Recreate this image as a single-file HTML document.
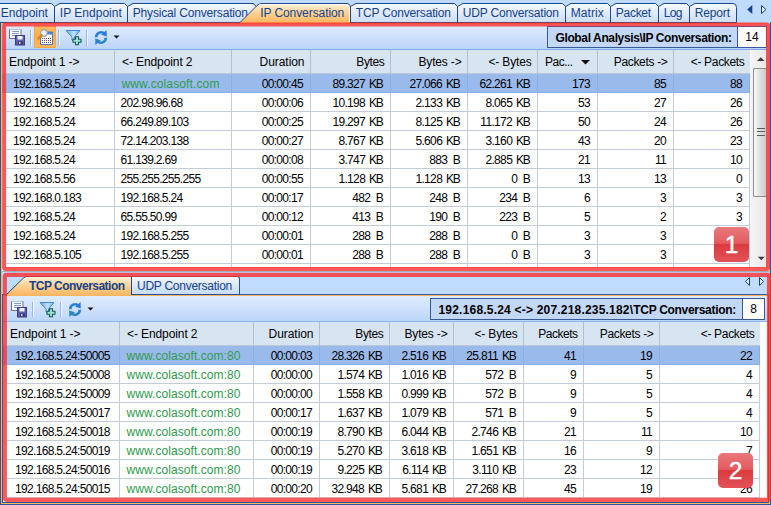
<!DOCTYPE html><html><head><meta charset="utf-8"><title>IP Conversation</title><style>
*{box-sizing:border-box;margin:0;padding:0}
html,body{width:771px;height:505px;overflow:hidden}
body{background:#bfdbff;font-family:"Liberation Sans",sans-serif;font-size:12px;color:#000;position:relative}
.abs{position:absolute}
.tab{position:absolute;top:3px;height:20px;border:1px solid #2b4f93;border-bottom:1px solid #2b4f93;border-radius:4px 4px 0 0;background:linear-gradient(#f4f8fe,#dbe8fa 45%,#c9dcf7);color:#15428b;white-space:nowrap;line-height:12px}
.tab span{position:absolute;top:3.3px}
.tb{position:absolute;background:linear-gradient(#dfecfe,#cfe1fc 50%,#bbd5fa);}
.hdr{position:absolute;background:#d7e4f2;border-bottom:1px solid #bcc8d8}
.hc{position:absolute;top:0;height:100%;border-right:1px solid #b4bfce;white-space:nowrap;line-height:12px}
.hc span{position:absolute;top:6px}
.row{position:absolute;left:0;height:19px;border-bottom:1px solid #c4ccda;background:#fff}
.row.sel{background:#9bbaec;border-bottom-color:#84b1ea}
.c{position:absolute;top:0;height:19px;border-right:1px solid #c4ccda;white-space:nowrap;line-height:12px;letter-spacing:-0.67px}
.row.sel .c{border-right-color:#84b1ea}
.c span{position:absolute;top:4px}
.g{color:#2e9a4d}
.c em{font-style:normal;letter-spacing:-1.3px;margin-left:1.2px;margin-right:0.6px}
.lbl{position:absolute;border:1px solid #38589c;background:#c3d8f6;font-weight:bold;white-space:nowrap;line-height:12px}
.lbl span{position:absolute;top:4px}
.lbl i{position:absolute;top:0;bottom:0;right:0;background:#fff;border-left:1px solid #38589c;font-style:normal;font-weight:normal;text-align:center}
.badge{position:absolute;width:35px;height:35px;border-radius:5px;background:linear-gradient(#e9797d,#e35a5f 47%,#db3a3f 49%,#e25257);color:#fff;font-size:24.5px;-webkit-text-stroke:0.45px #fff;line-height:36px;text-align:center}
.sep{position:absolute;width:2px;border-left:1px solid #9db8df;border-right:1px solid #f0f6ff}
</style></head><body>
<svg class="abs" style="left:0;top:0" width="771" height="24" viewBox="0 0 771 24"><defs><linearGradient id="tg" x1="0" y1="0" x2="0" y2="1"><stop offset="0" stop-color="#f7fafe"/><stop offset="0.45" stop-color="#e0ebfb"/><stop offset="1" stop-color="#cbddf7"/></linearGradient></defs><path d="M0 3.5 L733 3.5 Q736.5 3.5 736.5 7.5 L736.5 23 L0 23 Z" fill="url(#tg)"/><path d="M0 3.5 L733 3.5 Q736.5 3.5 736.5 7.5 L736.5 22.5 M0 22.5 L736.5 22.5" fill="none" stroke="#1f4690"/><path d="M0 4.5 L733 4.5" fill="none" stroke="#ffffff" stroke-opacity="0.8"/><path d="M50.5 2.5 L54.5 6.8 L61 2.5 Z" fill="#bfdbff"/><path d="M51.5 3.5 L54.5 6.5 L60 3.5 M54.5 6.5 L54.5 22.5" fill="none" stroke="#1f4690"/><path d="M123.5 2.5 L127.5 6.8 L134 2.5 Z" fill="#bfdbff"/><path d="M124.5 3.5 L127.5 6.5 L133 3.5 M127.5 6.5 L127.5 22.5" fill="none" stroke="#1f4690"/><path d="M346.5 2.5 L350.5 6.8 L357 2.5 Z" fill="#bfdbff"/><path d="M347.5 3.5 L350.5 6.5 L356 3.5 M350.5 6.5 L350.5 22.5" fill="none" stroke="#1f4690"/><path d="M453.5 2.5 L457.5 6.8 L464 2.5 Z" fill="#bfdbff"/><path d="M454.5 3.5 L457.5 6.5 L463 3.5 M457.5 6.5 L457.5 22.5" fill="none" stroke="#1f4690"/><path d="M561.5 2.5 L565.5 6.8 L572 2.5 Z" fill="#bfdbff"/><path d="M562.5 3.5 L565.5 6.5 L571 3.5 M565.5 6.5 L565.5 22.5" fill="none" stroke="#1f4690"/><path d="M606.5 2.5 L610.5 6.8 L617 2.5 Z" fill="#bfdbff"/><path d="M607.5 3.5 L610.5 6.5 L616 3.5 M610.5 6.5 L610.5 22.5" fill="none" stroke="#1f4690"/><path d="M654.5 2.5 L658.5 6.8 L665 2.5 Z" fill="#bfdbff"/><path d="M655.5 3.5 L658.5 6.5 L664 3.5 M658.5 6.5 L658.5 22.5" fill="none" stroke="#1f4690"/><path d="M685.5 2.5 L689.5 6.8 L696 2.5 Z" fill="#bfdbff"/><path d="M686.5 3.5 L689.5 6.5 L695 3.5 M689.5 6.5 L689.5 22.5" fill="none" stroke="#1f4690"/></svg>
<div class="abs" style="left:0.8px;top:7.3px;line-height:12px;color:#15428b;white-space:nowrap;letter-spacing:-0.045px">Endpoint</div>
<div class="abs" style="left:59.8px;top:7.3px;line-height:12px;color:#15428b;white-space:nowrap;letter-spacing:0.018px">IP Endpoint</div>
<div class="abs" style="left:132.8px;top:7.3px;line-height:12px;color:#15428b;white-space:nowrap;letter-spacing:-0.177px">Physical Conversation</div>
<div class="abs" style="left:355.8px;top:7.3px;line-height:12px;color:#15428b;white-space:nowrap;letter-spacing:-0.176px">TCP Conversation</div>
<div class="abs" style="left:462.8px;top:7.3px;line-height:12px;color:#15428b;white-space:nowrap;letter-spacing:-0.197px">UDP Conversation</div>
<div class="abs" style="left:570.8px;top:7.3px;line-height:12px;color:#15428b;white-space:nowrap;letter-spacing:0.055px">Matrix</div>
<div class="abs" style="left:615.8px;top:7.3px;line-height:12px;color:#15428b;white-space:nowrap;letter-spacing:-0.279px">Packet</div>
<div class="abs" style="left:663.8px;top:7.3px;line-height:12px;color:#15428b;white-space:nowrap;letter-spacing:-0.672px">Log</div>
<div class="abs" style="left:694.8px;top:7.3px;line-height:12px;color:#15428b;white-space:nowrap;letter-spacing:-0.169px">Report</div>
<svg class="abs" style="left:236px;top:0" width="118" height="24" viewBox="0 0 118 24"><defs><linearGradient id="og" x1="0" y1="0" x2="0" y2="1"><stop offset="0" stop-color="#fff3dc"/><stop offset="0.35" stop-color="#fdd9a4"/><stop offset="1" stop-color="#f9b45c"/></linearGradient></defs><path d="M3 23.5 L4.5 22 L21 5.5 Q23 3.5 26 3.5 L110 3.5 Q114.5 3.5 114.5 8 L114.5 23.5 Z" fill="url(#og)"/><path d="M16.5 2.5 L20.4 6.6 L21 5.5 Q23 3.5 26 3.5 L26 2.5 Z" fill="#bfdbff"/><path d="M17 3.5 L20.3 6.4" fill="none" stroke="#1f4690"/><path d="M0 22.5 L4 22.5 L21 5.5 Q23 3.5 26 3.5 L110 3.5 Q114.5 3.5 114.5 8 L114.5 23" fill="none" stroke="#1f4690" stroke-width="1"/><path d="M22.5 5.2 Q24 4.5 26 4.5 L110 4.5 Q113.5 4.5 113.5 8 L113.5 22" fill="none" stroke="#fff" stroke-opacity="0.75"/></svg>
<div class="abs" style="left:260.2px;top:7.3px;line-height:12px;color:#15428b;white-space:nowrap;letter-spacing:-0.076px">IP Conversation</div>
<svg class="abs" style="left:744px;top:3px" width="27" height="14" viewBox="0 0 27 14"><path d="M8.3 2 L8.3 11 L3.2 6.5 Z" fill="#15428b"/><path d="M17.5 2.5 L17.5 10.5 L22 6.5 Z" fill="#eef4fe" stroke="#15428b" stroke-width="1"/></svg>
<div class="tb" style="left:2px;top:24px;width:767px;height:26px;border-bottom:1px solid #7ea8e4"></div>
<svg class="abs" style="left:9px;top:29px" width="18" height="18" viewBox="0 0 18 18"><rect x="0.5" y="0.5" width="11.5" height="9" fill="#fdfeff" stroke="#6d7385"/><path d="M0.5 0.5h11.5" stroke="#b9c3d6"/><path d="M3 2.5h7M3 4.5h7M3 6.5h4" stroke="#7c9be0" stroke-width="1"/><rect x="6.5" y="6.5" width="9" height="9.5" fill="#5f5cb8" stroke="#3c3a86"/><rect x="8.5" y="7" width="5" height="3.5" fill="#f2f3fb"/><rect x="9" y="12.5" width="5" height="3" fill="#3b3d55"/><rect x="10" y="13" width="1.5" height="2" fill="#cfd2e6"/></svg>
<div class="sep" style="left:30px;top:30px;height:16px"></div>
<div class="abs" style="left:34px;top:26px;width:22px;height:22px;background:linear-gradient(#fdb862,#fbab48 50%,#fdb658);border:1px solid #f9a94a"></div>
<svg class="abs" style="left:36px;top:29px" width="18" height="18" viewBox="0 0 18 18"><path d="M4.5 9 L10 3 L16.5 3 L16.5 15.5 L4.5 15.5 Z" fill="#fff" stroke="#4a78cf"/><path d="M10 3 h6.5 v2.5 h-8.5z" fill="#4f7ed8"/><path d="M6 9.5h10M6 11.5h10M6 13.5h10" stroke="#6a4a6e" stroke-width="1" stroke-dasharray="1 1"/><circle cx="7.9" cy="4" r="3.3" fill="#eaf4fd" stroke="#9aa3ad" stroke-width="1.2"/><path d="M5.6 6.4 L2.6 9.4" stroke="#d08a2c" stroke-width="2.6" stroke-linecap="round"/></svg>
<div class="sep" style="left:58px;top:30px;height:16px"></div>
<svg class="abs" style="left:65px;top:29px" width="18" height="18" viewBox="0 0 18 18"><defs><linearGradient id="fg29" x1="0" y1="0" x2="1" y2="0"><stop offset="0" stop-color="#5fa4ea"/><stop offset="0.55" stop-color="#c4e2fa"/><stop offset="1" stop-color="#6fb0ee"/></linearGradient></defs><path d="M1 1.5 L15 1.5 L9.5 8 L9.5 12 L7 11 L7 8 Z" fill="url(#fg29)" stroke="#3f86d6" stroke-width="1"/><path d="M10.5 7.8h3v2.5h2.5v3h-2.5v2.5h-3v-2.5h-2.5v-3h2.5z" fill="#9fe6da" stroke="#17574c" stroke-width="1.1"/></svg>
<div class="sep" style="left:86px;top:30px;height:16px"></div>
<svg class="abs" style="left:92px;top:29px" width="30" height="18" viewBox="0 0 30 18"><path d="M4.2 8.2 A5 5 0 0 1 12.6 4.6" fill="none" stroke="#2c7cdc" stroke-width="2.6"/><path d="M14.6 1 L14.8 7.6 L9.2 5.8 Z" fill="#2c7cdc"/><path d="M13.8 8.8 A5 5 0 0 1 5.4 12.4" fill="none" stroke="#2a84c8" stroke-width="2.6"/><path d="M3.4 16 L3.2 9.4 L8.8 11.2 Z" fill="#2a84c8"/><path d="M21.5 6.5 h6 l-3 3 z" fill="#111"/></svg>
<div class="lbl" style="left:547px;top:26px;width:220px;height:22px"><span style="left:7.5px;top:4.5px;letter-spacing:-0.375px">Global Analysis\IP Conversation:</span><i style="width:29px;line-height:21px">14</i></div>
<div class="hdr" style="left:5px;top:50px;width:746px;height:24px">
<div class="hc" style="left:0px;width:110px"><span style="left:4px;letter-spacing:-0.1px">Endpoint 1 -&gt;</span></div>
<div class="hc" style="left:109px;width:118px"><span style="left:8px;letter-spacing:-0.1px">&lt;- Endpoint 2</span></div>
<div class="hc" style="left:226px;width:80px"><span style="right:5.5px;letter-spacing:-0.05px">Duration</span></div>
<div class="hc" style="left:305px;width:81px"><span style="right:5.5px;letter-spacing:-0.36px">Bytes</span></div>
<div class="hc" style="left:385px;width:78px"><span style="right:5.5px;letter-spacing:-0.17px">Bytes -&gt;</span></div>
<div class="hc" style="left:462px;width:71px"><span style="right:5.5px;letter-spacing:-0.17px">&lt;- Bytes</span></div>
<div class="hc" style="left:532px;width:61px"><span style="left:8px;letter-spacing:-0.5px">Pac...</span><svg style="position:absolute;left:44px;top:10px" width="9" height="5" viewBox="0 0 9 5"><path d="M0 0h9l-4.5 4.5z" fill="#111"/></svg></div>
<div class="hc" style="left:592px;width:77px"><span style="right:5.5px;letter-spacing:-0.33px">Packets -&gt;</span></div>
<div class="hc" style="left:668px;width:77px;border-right:none"><span style="right:5.5px;letter-spacing:-0.33px">&lt;- Packets</span></div>
</div>
<div class="abs" style="left:5px;top:74px;width:745px;height:193px;background:#fff;overflow:hidden">
<div class="row sel" style="top:0px;width:745px">
<div class="c" style="left:0px;width:110px"><span style="left:8px">192.168.5.24</span></div>
<div class="c g" style="left:109px;width:118px;letter-spacing:0.123px"><span style="left:7.5px">www.colasoft.com</span></div>
<div class="c" style="left:226px;width:80px"><span style="right:7px">00:00:45</span></div>
<div class="c" style="left:305px;width:81px"><span style="right:7px">89.327 <em>KB</em></span></div>
<div class="c" style="left:385px;width:78px"><span style="right:7px">27.066 <em>KB</em></span></div>
<div class="c" style="left:462px;width:71px"><span style="right:7px">62.261 <em>KB</em></span></div>
<div class="c" style="left:532px;width:61px"><span style="right:7px">173</span></div>
<div class="c" style="left:592px;width:77px"><span style="right:7px">85</span></div>
<div class="c" style="left:668px;width:77px"><span style="right:7px">88</span></div>
</div>
<div class="row" style="top:19px;width:745px">
<div class="c" style="left:0px;width:110px"><span style="left:8px">192.168.5.24</span></div>
<div class="c" style="left:109px;width:118px"><span style="left:6.5px">202.98.96.68</span></div>
<div class="c" style="left:226px;width:80px"><span style="right:7px">00:00:06</span></div>
<div class="c" style="left:305px;width:81px"><span style="right:7px">10.198 <em>KB</em></span></div>
<div class="c" style="left:385px;width:78px"><span style="right:7px">2.133 <em>KB</em></span></div>
<div class="c" style="left:462px;width:71px"><span style="right:7px">8.065 <em>KB</em></span></div>
<div class="c" style="left:532px;width:61px"><span style="right:7px">53</span></div>
<div class="c" style="left:592px;width:77px"><span style="right:7px">27</span></div>
<div class="c" style="left:668px;width:77px"><span style="right:7px">26</span></div>
</div>
<div class="row" style="top:38px;width:745px">
<div class="c" style="left:0px;width:110px"><span style="left:8px">192.168.5.24</span></div>
<div class="c" style="left:109px;width:118px"><span style="left:6.5px">66.249.89.103</span></div>
<div class="c" style="left:226px;width:80px"><span style="right:7px">00:00:25</span></div>
<div class="c" style="left:305px;width:81px"><span style="right:7px">19.297 <em>KB</em></span></div>
<div class="c" style="left:385px;width:78px"><span style="right:7px">8.125 <em>KB</em></span></div>
<div class="c" style="left:462px;width:71px"><span style="right:7px">11.172 <em>KB</em></span></div>
<div class="c" style="left:532px;width:61px"><span style="right:7px">50</span></div>
<div class="c" style="left:592px;width:77px"><span style="right:7px">24</span></div>
<div class="c" style="left:668px;width:77px"><span style="right:7px">26</span></div>
</div>
<div class="row" style="top:57px;width:745px">
<div class="c" style="left:0px;width:110px"><span style="left:8px">192.168.5.24</span></div>
<div class="c" style="left:109px;width:118px"><span style="left:6.5px">72.14.203.138</span></div>
<div class="c" style="left:226px;width:80px"><span style="right:7px">00:00:27</span></div>
<div class="c" style="left:305px;width:81px"><span style="right:7px">8.767 <em>KB</em></span></div>
<div class="c" style="left:385px;width:78px"><span style="right:7px">5.606 <em>KB</em></span></div>
<div class="c" style="left:462px;width:71px"><span style="right:7px">3.160 <em>KB</em></span></div>
<div class="c" style="left:532px;width:61px"><span style="right:7px">43</span></div>
<div class="c" style="left:592px;width:77px"><span style="right:7px">20</span></div>
<div class="c" style="left:668px;width:77px"><span style="right:7px">23</span></div>
</div>
<div class="row" style="top:76px;width:745px">
<div class="c" style="left:0px;width:110px"><span style="left:8px">192.168.5.24</span></div>
<div class="c" style="left:109px;width:118px"><span style="left:6.5px">61.139.2.69</span></div>
<div class="c" style="left:226px;width:80px"><span style="right:7px">00:00:08</span></div>
<div class="c" style="left:305px;width:81px"><span style="right:7px">3.747 <em>KB</em></span></div>
<div class="c" style="left:385px;width:78px"><span style="right:7px">883&nbsp; B</span></div>
<div class="c" style="left:462px;width:71px"><span style="right:7px">2.885 <em>KB</em></span></div>
<div class="c" style="left:532px;width:61px"><span style="right:7px">21</span></div>
<div class="c" style="left:592px;width:77px"><span style="right:7px">11</span></div>
<div class="c" style="left:668px;width:77px"><span style="right:7px">10</span></div>
</div>
<div class="row" style="top:95px;width:745px">
<div class="c" style="left:0px;width:110px"><span style="left:8px">192.168.5.56</span></div>
<div class="c" style="left:109px;width:118px"><span style="left:6.5px">255.255.255.255</span></div>
<div class="c" style="left:226px;width:80px"><span style="right:7px">00:00:55</span></div>
<div class="c" style="left:305px;width:81px"><span style="right:7px">1.128 <em>KB</em></span></div>
<div class="c" style="left:385px;width:78px"><span style="right:7px">1.128 <em>KB</em></span></div>
<div class="c" style="left:462px;width:71px"><span style="right:7px">0&nbsp; B</span></div>
<div class="c" style="left:532px;width:61px"><span style="right:7px">13</span></div>
<div class="c" style="left:592px;width:77px"><span style="right:7px">13</span></div>
<div class="c" style="left:668px;width:77px"><span style="right:7px">0</span></div>
</div>
<div class="row" style="top:114px;width:745px">
<div class="c" style="left:0px;width:110px"><span style="left:8px">192.168.0.183</span></div>
<div class="c" style="left:109px;width:118px"><span style="left:6.5px">192.168.5.24</span></div>
<div class="c" style="left:226px;width:80px"><span style="right:7px">00:00:17</span></div>
<div class="c" style="left:305px;width:81px"><span style="right:7px">482&nbsp; B</span></div>
<div class="c" style="left:385px;width:78px"><span style="right:7px">248&nbsp; B</span></div>
<div class="c" style="left:462px;width:71px"><span style="right:7px">234&nbsp; B</span></div>
<div class="c" style="left:532px;width:61px"><span style="right:7px">6</span></div>
<div class="c" style="left:592px;width:77px"><span style="right:7px">3</span></div>
<div class="c" style="left:668px;width:77px"><span style="right:7px">3</span></div>
</div>
<div class="row" style="top:133px;width:745px">
<div class="c" style="left:0px;width:110px"><span style="left:8px">192.168.5.24</span></div>
<div class="c" style="left:109px;width:118px"><span style="left:6.5px">65.55.50.99</span></div>
<div class="c" style="left:226px;width:80px"><span style="right:7px">00:00:12</span></div>
<div class="c" style="left:305px;width:81px"><span style="right:7px">413&nbsp; B</span></div>
<div class="c" style="left:385px;width:78px"><span style="right:7px">190&nbsp; B</span></div>
<div class="c" style="left:462px;width:71px"><span style="right:7px">223&nbsp; B</span></div>
<div class="c" style="left:532px;width:61px"><span style="right:7px">5</span></div>
<div class="c" style="left:592px;width:77px"><span style="right:7px">2</span></div>
<div class="c" style="left:668px;width:77px"><span style="right:7px">3</span></div>
</div>
<div class="row" style="top:152px;width:745px">
<div class="c" style="left:0px;width:110px"><span style="left:8px">192.168.5.24</span></div>
<div class="c" style="left:109px;width:118px"><span style="left:6.5px">192.168.5.255</span></div>
<div class="c" style="left:226px;width:80px"><span style="right:7px">00:00:01</span></div>
<div class="c" style="left:305px;width:81px"><span style="right:7px">288&nbsp; B</span></div>
<div class="c" style="left:385px;width:78px"><span style="right:7px">288&nbsp; B</span></div>
<div class="c" style="left:462px;width:71px"><span style="right:7px">0&nbsp; B</span></div>
<div class="c" style="left:532px;width:61px"><span style="right:7px">3</span></div>
<div class="c" style="left:592px;width:77px"><span style="right:7px">3</span></div>
<div class="c" style="left:668px;width:77px"><span style="right:7px">3</span></div>
</div>
<div class="row" style="top:171px;width:745px">
<div class="c" style="left:0px;width:110px"><span style="left:8px">192.168.5.105</span></div>
<div class="c" style="left:109px;width:118px"><span style="left:6.5px">192.168.5.255</span></div>
<div class="c" style="left:226px;width:80px"><span style="right:7px">00:00:01</span></div>
<div class="c" style="left:305px;width:81px"><span style="right:7px">288&nbsp; B</span></div>
<div class="c" style="left:385px;width:78px"><span style="right:7px">288&nbsp; B</span></div>
<div class="c" style="left:462px;width:71px"><span style="right:7px">0&nbsp; B</span></div>
<div class="c" style="left:532px;width:61px"><span style="right:7px">3</span></div>
<div class="c" style="left:592px;width:77px"><span style="right:7px">3</span></div>
<div class="c" style="left:668px;width:77px"><span style="right:7px">3</span></div>
</div>
<div class="row" style="top:190px;width:745px">
<div class="c" style="left:0px;width:110px"><span style="left:9px"></span></div>
<div class="c" style="left:109px;width:118px"><span style="left:6.5px"></span></div>
<div class="c" style="left:226px;width:80px"><span style="right:7px"></span></div>
<div class="c" style="left:305px;width:81px"><span style="right:7px"></span></div>
<div class="c" style="left:385px;width:78px"><span style="right:7px"></span></div>
<div class="c" style="left:462px;width:71px"><span style="right:7px"></span></div>
<div class="c" style="left:532px;width:61px"><span style="right:7px"></span></div>
<div class="c" style="left:592px;width:77px"><span style="right:7px"></span></div>
<div class="c" style="left:668px;width:77px"><span style="right:7px"></span></div>
</div>
</div>
<div class="abs" style="left:750px;top:50px;width:16px;height:217px;background:linear-gradient(90deg,#f6f6f6,#efefef 40%,#e9e9e9)"></div>
<div class="abs" style="left:753px;top:68px;width:14px;height:129px;border:1px solid #8b8f94;border-right:none;border-radius:2px 0 0 2px;background:linear-gradient(90deg,#fafafa,#e3e3e3 40%,#c6c6c6)"></div>
<svg class="abs" style="left:756px;top:56px" width="10" height="6" viewBox="0 0 10 6"><path d="M1 5 L4.8 1.2 L8.6 5z" fill="#3a3f36"/></svg>
<svg class="abs" style="left:757px;top:256px" width="10" height="6" viewBox="0 0 10 6"><path d="M0.8 0.8 L4.3 4.3 L7.8 0.8z" fill="#3a3f36"/></svg>
<div class="abs" style="left:757px;top:128px;width:8px;height:8px;border-top:1px solid #5c5c5c;border-bottom:1px solid #5c5c5c"><div style="margin-top:2px;border-top:1px solid #5c5c5c"></div></div>
<div class="badge" style="left:714px;top:227px">1</div>
<div class="abs" style="left:2px;top:294px;width:766px;height:1px;background:#3a5c9e"></div><div class="abs" style="left:2px;top:295px;width:766px;height:1px;background:#f6b25c"></div>
<div class="tab" style="left:131px;top:276px;width:109px;height:19px;border-radius:0 3px 0 0;border-left:none"><span style="left:6px;top:2.5px;letter-spacing:-0.26px">UDP Conversation</span></div>
<svg class="abs" style="left:2px;top:275px" width="132" height="21" viewBox="0 0 132 21"><defs><linearGradient id="og2" x1="0" y1="0" x2="0" y2="1"><stop offset="0" stop-color="#fff3dc"/><stop offset="0.35" stop-color="#fdd9a4"/><stop offset="1" stop-color="#f9b45c"/></linearGradient></defs><path d="M0 21 L0 20 L4 20 L21.5 3 Q23 1.5 25 1.5 L129.5 1.5 L129.5 21 Z" fill="url(#og2)"/><path d="M0 19.5 L4.5 19.5 L21.5 3 Q23 1.5 25 1.5 L129.5 1.5 L129.5 20" fill="none" stroke="#1f4690" stroke-width="1"/></svg>
<div class="abs" style="left:29px;top:279.5px;line-height:12px;color:#15428b;font-weight:bold;white-space:nowrap;letter-spacing:-0.518px">TCP Conversation</div>
<svg class="abs" style="left:742px;top:276px" width="26" height="12" viewBox="0 0 26 12"><path d="M7.5 1.5 L7.5 9.5 L3.5 5.5 Z" fill="#e4eefd" stroke="#15428b" stroke-width="1"/><path d="M17.5 1.5 L17.5 9.5 L21.5 5.5 Z" fill="#e4eefd" stroke="#15428b" stroke-width="1"/></svg>
<div class="tb" style="left:2px;top:296px;width:767px;height:26px;border-bottom:1px solid #8fb4ea"></div>
<svg class="abs" style="left:11px;top:301px" width="18" height="18" viewBox="0 0 18 18"><rect x="0.5" y="0.5" width="11.5" height="9" fill="#fdfeff" stroke="#6d7385"/><path d="M0.5 0.5h11.5" stroke="#b9c3d6"/><path d="M3 2.5h7M3 4.5h7M3 6.5h4" stroke="#7c9be0" stroke-width="1"/><rect x="6.5" y="6.5" width="9" height="9.5" fill="#5f5cb8" stroke="#3c3a86"/><rect x="8.5" y="7" width="5" height="3.5" fill="#f2f3fb"/><rect x="9" y="12.5" width="5" height="3" fill="#3b3d55"/><rect x="10" y="13" width="1.5" height="2" fill="#cfd2e6"/></svg>
<div class="sep" style="left:32px;top:302px;height:15px"></div>
<svg class="abs" style="left:39.3px;top:300.5px" width="18" height="18" viewBox="0 0 18 18"><defs><linearGradient id="fg300" x1="0" y1="0" x2="1" y2="0"><stop offset="0" stop-color="#5fa4ea"/><stop offset="0.55" stop-color="#c4e2fa"/><stop offset="1" stop-color="#6fb0ee"/></linearGradient></defs><path d="M1 1.5 L15 1.5 L9.5 8 L9.5 12 L7 11 L7 8 Z" fill="url(#fg300)" stroke="#3f86d6" stroke-width="1"/><path d="M10.5 7.8h3v2.5h2.5v3h-2.5v2.5h-3v-2.5h-2.5v-3h2.5z" fill="#9fe6da" stroke="#17574c" stroke-width="1.1"/></svg>
<div class="sep" style="left:60px;top:302px;height:15px"></div>
<svg class="abs" style="left:66px;top:301px" width="30" height="18" viewBox="0 0 30 18"><path d="M4.2 8.2 A5 5 0 0 1 12.6 4.6" fill="none" stroke="#2c7cdc" stroke-width="2.6"/><path d="M14.6 1 L14.8 7.6 L9.2 5.8 Z" fill="#2c7cdc"/><path d="M13.8 8.8 A5 5 0 0 1 5.4 12.4" fill="none" stroke="#2a84c8" stroke-width="2.6"/><path d="M3.4 16 L3.2 9.4 L8.8 11.2 Z" fill="#2a84c8"/><path d="M21.5 6.5 h6 l-3 3 z" fill="#111"/></svg>
<div class="lbl" style="left:430px;top:298px;width:335px;height:22px"><span style="left:7.5px;top:4.5px"><b style="letter-spacing:0.2px">192.168.5.24 &lt;-&gt; 207.218.235.182\</b><b style="letter-spacing:-0.3px">TCP Conversation:</b></span><i style="width:22px;line-height:20px">8</i></div>
<div class="hdr" style="left:2px;top:322px;width:758px;height:24px">
<div class="hc" style="left:0px;width:118px"><span style="left:8px;top:6px;letter-spacing:-0.1px">Endpoint 1 -&gt;</span></div>
<div class="hc" style="left:117px;width:135px"><span style="left:8px;top:6px;letter-spacing:-0.1px">&lt;- Endpoint 2</span></div>
<div class="hc" style="left:251px;width:67px"><span style="right:5.5px;top:6px;letter-spacing:-0.05px">Duration</span></div>
<div class="hc" style="left:317px;width:71px"><span style="right:5.5px;top:6px;letter-spacing:-0.36px">Bytes</span></div>
<div class="hc" style="left:387px;width:65px"><span style="right:5.5px;top:6px;letter-spacing:-0.17px">Bytes -&gt;</span></div>
<div class="hc" style="left:451px;width:71px"><span style="right:5.5px;top:6px;letter-spacing:-0.17px">&lt;- Bytes</span></div>
<div class="hc" style="left:521px;width:61px"><span style="right:5.5px;top:6px;letter-spacing:-0.5px">Packets</span></div>
<div class="hc" style="left:581px;width:77px"><span style="right:5.5px;top:6px;letter-spacing:-0.33px">Packets -&gt;</span></div>
<div class="hc" style="left:657px;width:101px;border-right:none"><span style="right:5.5px;top:6px;letter-spacing:-0.33px">&lt;- Packets</span></div>
</div>
<div class="abs" style="left:6px;top:346px;width:754px;height:152px;background:#fff;overflow:hidden">
<div class="row sel" style="top:0px;width:754px">
<div class="c" style="left:0px;width:114px"><span style="left:9px">192.168.5.24:50005</span></div>
<div class="c g" style="left:113px;width:135px;letter-spacing:0.068px"><span style="left:7.5px">www.colasoft.com:80</span></div>
<div class="c" style="left:247px;width:67px"><span style="right:7px">00:00:03</span></div>
<div class="c" style="left:313px;width:71px"><span style="right:7px">28.326 <em>KB</em></span></div>
<div class="c" style="left:383px;width:65px"><span style="right:7px">2.516 <em>KB</em></span></div>
<div class="c" style="left:447px;width:71px"><span style="right:7px">25.811 <em>KB</em></span></div>
<div class="c" style="left:517px;width:61px"><span style="right:7px">41</span></div>
<div class="c" style="left:577px;width:77px"><span style="right:7px">19</span></div>
<div class="c" style="left:653px;width:101px"><span style="right:7px">22</span></div>
</div>
<div class="row" style="top:19px;width:754px">
<div class="c" style="left:0px;width:114px"><span style="left:9px">192.168.5.24:50008</span></div>
<div class="c g" style="left:113px;width:135px;letter-spacing:0.068px"><span style="left:7.5px">www.colasoft.com:80</span></div>
<div class="c" style="left:247px;width:67px"><span style="right:7px">00:00:00</span></div>
<div class="c" style="left:313px;width:71px"><span style="right:7px">1.574 <em>KB</em></span></div>
<div class="c" style="left:383px;width:65px"><span style="right:7px">1.016 <em>KB</em></span></div>
<div class="c" style="left:447px;width:71px"><span style="right:7px">572&nbsp; B</span></div>
<div class="c" style="left:517px;width:61px"><span style="right:7px">9</span></div>
<div class="c" style="left:577px;width:77px"><span style="right:7px">5</span></div>
<div class="c" style="left:653px;width:101px"><span style="right:7px">4</span></div>
</div>
<div class="row" style="top:38px;width:754px">
<div class="c" style="left:0px;width:114px"><span style="left:9px">192.168.5.24:50009</span></div>
<div class="c g" style="left:113px;width:135px;letter-spacing:0.068px"><span style="left:7.5px">www.colasoft.com:80</span></div>
<div class="c" style="left:247px;width:67px"><span style="right:7px">00:00:00</span></div>
<div class="c" style="left:313px;width:71px"><span style="right:7px">1.558 <em>KB</em></span></div>
<div class="c" style="left:383px;width:65px"><span style="right:7px">0.999 <em>KB</em></span></div>
<div class="c" style="left:447px;width:71px"><span style="right:7px">572&nbsp; B</span></div>
<div class="c" style="left:517px;width:61px"><span style="right:7px">9</span></div>
<div class="c" style="left:577px;width:77px"><span style="right:7px">5</span></div>
<div class="c" style="left:653px;width:101px"><span style="right:7px">4</span></div>
</div>
<div class="row" style="top:57px;width:754px">
<div class="c" style="left:0px;width:114px"><span style="left:9px">192.168.5.24:50017</span></div>
<div class="c g" style="left:113px;width:135px;letter-spacing:0.068px"><span style="left:7.5px">www.colasoft.com:80</span></div>
<div class="c" style="left:247px;width:67px"><span style="right:7px">00:00:17</span></div>
<div class="c" style="left:313px;width:71px"><span style="right:7px">1.637 <em>KB</em></span></div>
<div class="c" style="left:383px;width:65px"><span style="right:7px">1.079 <em>KB</em></span></div>
<div class="c" style="left:447px;width:71px"><span style="right:7px">571&nbsp; B</span></div>
<div class="c" style="left:517px;width:61px"><span style="right:7px">9</span></div>
<div class="c" style="left:577px;width:77px"><span style="right:7px">5</span></div>
<div class="c" style="left:653px;width:101px"><span style="right:7px">4</span></div>
</div>
<div class="row" style="top:76px;width:754px">
<div class="c" style="left:0px;width:114px"><span style="left:9px">192.168.5.24:50018</span></div>
<div class="c g" style="left:113px;width:135px;letter-spacing:0.068px"><span style="left:7.5px">www.colasoft.com:80</span></div>
<div class="c" style="left:247px;width:67px"><span style="right:7px">00:00:19</span></div>
<div class="c" style="left:313px;width:71px"><span style="right:7px">8.790 <em>KB</em></span></div>
<div class="c" style="left:383px;width:65px"><span style="right:7px">6.044 <em>KB</em></span></div>
<div class="c" style="left:447px;width:71px"><span style="right:7px">2.746 <em>KB</em></span></div>
<div class="c" style="left:517px;width:61px"><span style="right:7px">21</span></div>
<div class="c" style="left:577px;width:77px"><span style="right:7px">11</span></div>
<div class="c" style="left:653px;width:101px"><span style="right:7px">10</span></div>
</div>
<div class="row" style="top:95px;width:754px">
<div class="c" style="left:0px;width:114px"><span style="left:9px">192.168.5.24:50019</span></div>
<div class="c g" style="left:113px;width:135px;letter-spacing:0.068px"><span style="left:7.5px">www.colasoft.com:80</span></div>
<div class="c" style="left:247px;width:67px"><span style="right:7px">00:00:19</span></div>
<div class="c" style="left:313px;width:71px"><span style="right:7px">5.270 <em>KB</em></span></div>
<div class="c" style="left:383px;width:65px"><span style="right:7px">3.618 <em>KB</em></span></div>
<div class="c" style="left:447px;width:71px"><span style="right:7px">1.651 <em>KB</em></span></div>
<div class="c" style="left:517px;width:61px"><span style="right:7px">16</span></div>
<div class="c" style="left:577px;width:77px"><span style="right:7px">9</span></div>
<div class="c" style="left:653px;width:101px"><span style="right:7px">7</span></div>
</div>
<div class="row" style="top:114px;width:754px">
<div class="c" style="left:0px;width:114px"><span style="left:9px">192.168.5.24:50016</span></div>
<div class="c g" style="left:113px;width:135px;letter-spacing:0.068px"><span style="left:7.5px">www.colasoft.com:80</span></div>
<div class="c" style="left:247px;width:67px"><span style="right:7px">00:00:19</span></div>
<div class="c" style="left:313px;width:71px"><span style="right:7px">9.225 <em>KB</em></span></div>
<div class="c" style="left:383px;width:65px"><span style="right:7px">6.114 <em>KB</em></span></div>
<div class="c" style="left:447px;width:71px"><span style="right:7px">3.110 <em>KB</em></span></div>
<div class="c" style="left:517px;width:61px"><span style="right:7px">23</span></div>
<div class="c" style="left:577px;width:77px"><span style="right:7px">12</span></div>
<div class="c" style="left:653px;width:101px"><span style="right:7px">11</span></div>
</div>
<div class="row" style="top:133px;width:754px">
<div class="c" style="left:0px;width:114px"><span style="left:9px">192.168.5.24:50015</span></div>
<div class="c g" style="left:113px;width:135px;letter-spacing:0.068px"><span style="left:7.5px">www.colasoft.com:80</span></div>
<div class="c" style="left:247px;width:67px"><span style="right:7px">00:00:20</span></div>
<div class="c" style="left:313px;width:71px"><span style="right:7px">32.948 <em>KB</em></span></div>
<div class="c" style="left:383px;width:65px"><span style="right:7px">5.681 <em>KB</em></span></div>
<div class="c" style="left:447px;width:71px"><span style="right:7px">27.268 <em>KB</em></span></div>
<div class="c" style="left:517px;width:61px"><span style="right:7px">45</span></div>
<div class="c" style="left:577px;width:77px"><span style="right:7px">19</span></div>
<div class="c" style="left:653px;width:101px"><span style="right:7px">26</span></div>
</div>
</div>
<div class="abs" style="left:760px;top:322px;width:7px;height:176px;background:#fff"></div>
<div class="badge" style="left:718px;top:453px">2</div>
<div class="abs" style="left:2px;top:50px;width:4px;height:24px;background:#d7e4f2"></div><div class="abs" style="left:2px;top:74px;width:4px;height:19px;background:#9bbaec"></div><div class="abs" style="left:2px;top:93px;width:4px;height:178px;background:#fff"></div><div class="abs" style="left:2px;top:267px;width:767px;height:4px;background:#fff"></div><div class="abs" style="left:2px;top:267px;width:767px;height:1px;background:#c9ced8"></div><div class="abs" style="left:2px;top:271px;width:767px;height:1px;background:#9fb0bd"></div><div class="abs" style="left:3px;top:322px;width:4px;height:24px;background:#d7e4f2"></div><div class="abs" style="left:3px;top:346px;width:4px;height:19px;background:#9bbaec"></div><div class="abs" style="left:3px;top:365px;width:4px;height:137px;background:#fff"></div><div class="abs" style="left:3px;top:498px;width:765px;height:4px;background:#fff"></div><div class="abs" style="left:760px;top:322px;width:8px;height:180px;background:#fff"></div>
<div class="abs" style="left:0;top:22px;width:1px;height:483px;background:#2b55a0"></div><div class="abs" style="left:1px;top:23px;width:1px;height:481px;background:#f9b85f"></div><div class="abs" style="left:770px;top:22px;width:1px;height:483px;background:#2b55a0"></div><div class="abs" style="left:769px;top:23px;width:1px;height:481px;background:#f9b85f"></div><div class="abs" style="left:2px;top:502px;width:767px;height:1px;background:#2b55a0"></div><div class="abs" style="left:2px;top:294px;width:1px;height:208px;background:#2b55a0"></div><div class="abs" style="left:768px;top:294px;width:1px;height:208px;background:#2b55a0"></div><div class="abs" style="left:1px;top:503px;width:769px;height:1px;background:#f9b85f"></div><div class="abs" style="left:0;top:504px;width:771px;height:1px;background:#2b55a0"></div><div class="abs" style="left:1px;top:23px;width:769px;height:1px;background:#f9b85f"></div>
<svg class="abs" style="left:0;top:0;pointer-events:none" width="771" height="505" viewBox="0 0 771 505"><rect x="4.1" y="24.6" width="763.9" height="244.5" rx="1.5" fill="none" stroke="#fb2e2e" stroke-opacity="0.8" stroke-width="4"/><rect x="4.8" y="274.8" width="764.2" height="225.1" rx="2" fill="none" stroke="#fb2e2e" stroke-opacity="0.8" stroke-width="4.2"/></svg>
</body></html>
